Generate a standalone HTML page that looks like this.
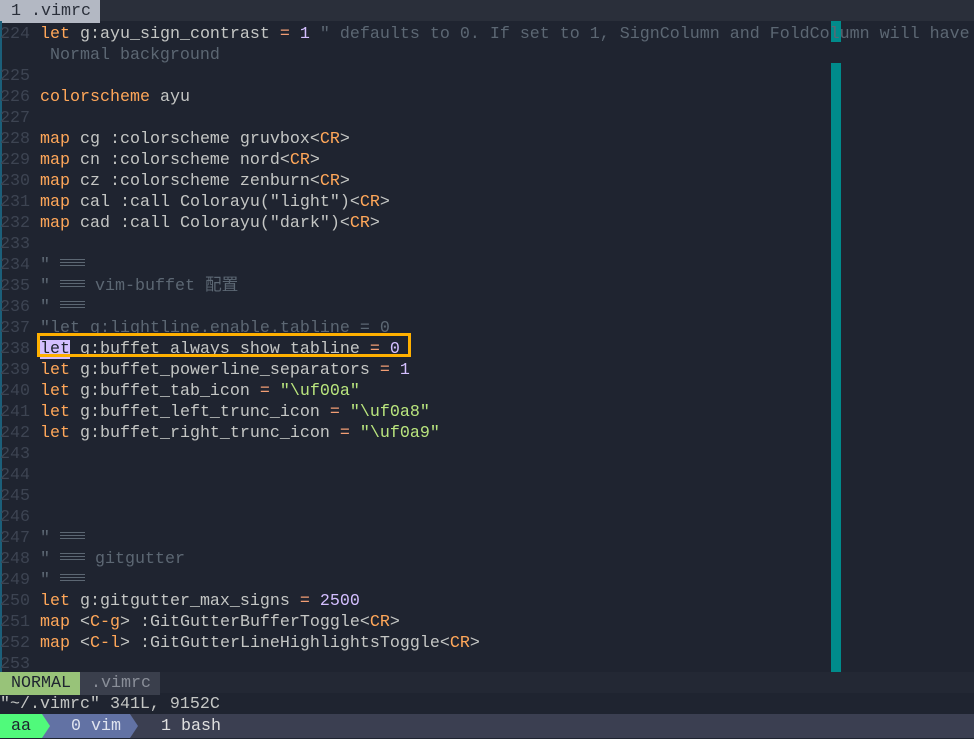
<!DOCTYPE html>
<html><head><meta charset="utf-8"><style>
*{margin:0;padding:0;box-sizing:border-box}
body{width:974px;height:738px;background:#1f2430;overflow:hidden;font-family:"Liberation Mono","Noto Sans CJK SC",monospace;font-size:16.67px;color:#c4c6c4;position:relative}
.r{position:absolute;left:0;height:21px;line-height:27px;white-space:pre;width:974px}
.n{color:#3d4452}
.k{color:#ffa759}
.o{color:#f29e74}
.p{color:#d4bfff}
.s{color:#bae67e}
.c{color:#5c6773}
.eq{display:inline-block;width:25px;height:7px;border-top:1.5px solid #5c6773;border-bottom:1.5px solid #5c6773;vertical-align:middle;position:relative;top:-2px}
.eq:after{content:"";position:absolute;left:0;right:0;top:1.5px;border-top:1.5px solid #5c6773}
.b{position:absolute;left:0;height:21px;line-height:23px;white-space:pre;width:974px}
</style></head><body>
<div class="b" style="top:0;background:#2a2f3a"><span style="background:#b3b8c3;color:#2a2f3a;display:inline-block;width:100px;padding-left:11px">1 .vimrc</span></div>
<div style="position:absolute;left:831px;top:21px;width:10px;height:21px;background:#008b8b"></div>
<div style="position:absolute;left:831px;top:63px;width:10px;height:609px;background:#008b8b"></div>
<div style="position:absolute;left:0;top:21px;width:2px;height:651px;background:#1b5f7a"></div>
<div class="r" style="top:21px"><span class="n">224</span> <span class="k">let</span> g:ayu_sign_contrast <span class="o">=</span> <span class="p">1</span> <span class="c">" defaults to 0. If set to 1, SignColumn and FoldColumn will have</span></div>
<div class="r" style="top:42px">     <span class="c">Normal background</span></div>
<div class="r" style="top:63px"><span class="n">225</span></div>
<div class="r" style="top:84px"><span class="n">226</span> <span class="k">colorscheme</span> ayu</div>
<div class="r" style="top:105px"><span class="n">227</span></div>
<div class="r" style="top:126px"><span class="n">228</span> <span class="k">map</span> cg :colorscheme gruvbox&lt;<span class="k">CR</span>&gt;</div>
<div class="r" style="top:147px"><span class="n">229</span> <span class="k">map</span> cn :colorscheme nord&lt;<span class="k">CR</span>&gt;</div>
<div class="r" style="top:168px"><span class="n">230</span> <span class="k">map</span> cz :colorscheme zenburn&lt;<span class="k">CR</span>&gt;</div>
<div class="r" style="top:189px"><span class="n">231</span> <span class="k">map</span> cal :call Colorayu("light")&lt;<span class="k">CR</span>&gt;</div>
<div class="r" style="top:210px"><span class="n">232</span> <span class="k">map</span> cad :call Colorayu("dark")&lt;<span class="k">CR</span>&gt;</div>
<div class="r" style="top:231px"><span class="n">233</span></div>
<div class="r" style="top:252px"><span class="n">234</span> <span class="c">" </span><span class="eq"></span></div>
<div class="r" style="top:273px"><span class="n">235</span> <span class="c">" </span><span class="eq"></span><span class="c"> vim-buffet 配置</span></div>
<div class="r" style="top:294px"><span class="n">236</span> <span class="c">" </span><span class="eq"></span></div>
<div class="r" style="top:315px"><span class="n">237</span> <span class="c">"let g:lightline.enable.tabline = 0</span></div>
<div class="r" style="top:336px"><span class="n">238</span> <span style="background:#d4bfff;color:#1f2430">let</span> g:buffet_always_show_tabline <span class="o">=</span> <span class="p">0</span></div>
<div style="position:absolute;left:37px;top:333px;width:374px;height:24px;border:3px solid #ffb000"></div>
<div class="r" style="top:357px"><span class="n">239</span> <span class="k">let</span> g:buffet_powerline_separators <span class="o">=</span> <span class="p">1</span></div>
<div class="r" style="top:378px"><span class="n">240</span> <span class="k">let</span> g:buffet_tab_icon <span class="o">=</span> <span class="s">"\uf00a"</span></div>
<div class="r" style="top:399px"><span class="n">241</span> <span class="k">let</span> g:buffet_left_trunc_icon <span class="o">=</span> <span class="s">"\uf0a8"</span></div>
<div class="r" style="top:420px"><span class="n">242</span> <span class="k">let</span> g:buffet_right_trunc_icon <span class="o">=</span> <span class="s">"\uf0a9"</span></div>
<div class="r" style="top:441px"><span class="n">243</span></div>
<div class="r" style="top:462px"><span class="n">244</span></div>
<div class="r" style="top:483px"><span class="n">245</span></div>
<div class="r" style="top:504px"><span class="n">246</span></div>
<div class="r" style="top:525px"><span class="n">247</span> <span class="c">" </span><span class="eq"></span></div>
<div class="r" style="top:546px"><span class="n">248</span> <span class="c">" </span><span class="eq"></span><span class="c"> gitgutter</span></div>
<div class="r" style="top:567px"><span class="n">249</span> <span class="c">" </span><span class="eq"></span></div>
<div class="r" style="top:588px"><span class="n">250</span> <span class="k">let</span> g:gitgutter_max_signs <span class="o">=</span> <span class="p">2500</span></div>
<div class="r" style="top:609px"><span class="n">251</span> <span class="k">map</span> &lt;<span class="k">C-g</span>&gt; :GitGutterBufferToggle&lt;<span class="k">CR</span>&gt;</div>
<div class="r" style="top:630px"><span class="n">252</span> <span class="k">map</span> &lt;<span class="k">C-l</span>&gt; :GitGutterLineHighlightsToggle&lt;<span class="k">CR</span>&gt;</div>
<div class="r" style="top:651px"><span class="n">253</span></div>
<div class="b" style="top:672px;background:#232834"><span style="display:inline-block;width:80px;background:#98c379;color:#1f2430;padding-left:11px">NORMAL</span><span style="display:inline-block;width:80px;background:#3a3f4c;color:#8a8f99;padding-left:11px">.vimrc</span></div>
<div class="b" style="top:693px;line-height:24px">"~/.vimrc" 341L, 9152C</div>
<div style="position:absolute;left:0;top:714px;width:974px;height:24px;background:#3b3f51;font-size:16.67px;line-height:25px;white-space:pre">
<div style="position:absolute;left:0;top:0;width:42px;height:24px;background:#50fa7b;color:#1f2430;padding-left:11px">aa</div>
<div style="position:absolute;left:42px;top:0;width:0;height:0;border-top:12px solid #6272a4;border-bottom:12px solid #6272a4;border-left:8px solid #50fa7b"></div>
<div style="position:absolute;left:50px;top:0;width:80px;height:24px;background:#6272a4;color:#e0e4f0;padding-left:21px">0 vim</div>
<div style="position:absolute;left:130px;top:0;width:0;height:0;border-top:12px solid transparent;border-bottom:12px solid transparent;border-left:8px solid #6272a4"></div>
<div style="position:absolute;left:161px;top:0;color:#e0e0e0">1 bash</div>
</div>
</body></html>
